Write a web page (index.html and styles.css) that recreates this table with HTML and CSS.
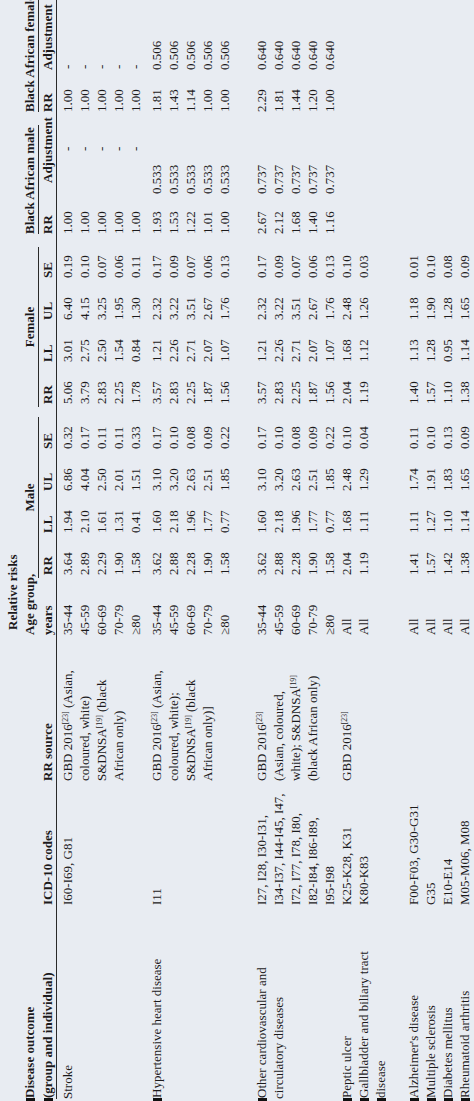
FILE: index.html
```html
<!DOCTYPE html>
<html lang="en">
<head>
<meta charset="utf-8">
<title>Relative risks table</title>
<link rel="stylesheet" href="styles.css">
</head>
<body>
<div class="page">
  <div class="sheet">
    <table class="t">
      <colgroup>
        <col class="c-dis"><col class="c-icd"><col class="c-src"><col class="c-age">
        <col class="c-n"><col class="c-n"><col class="c-n"><col class="c-se">
        <col class="c-n"><col class="c-n"><col class="c-n"><col class="c-se2">
        <col class="c-brr"><col class="c-badj"><col class="c-n"><col class="c-fadj">
      </colgroup>
      <thead>
        <tr class="h1">
          <th colspan="3"></th>
          <th colspan="13" class="rr-title">Relative risks</th>
        </tr>
        <tr class="h2">
          <th class="mk">Disease outcome</th>
          <th></th>
          <th></th>
          <th>Age group,</th>
          <th colspan="4" class="grp"><div class="rule ctr">Male</div></th>
          <th colspan="4" class="grp"><div class="rule ctr">Female</div></th>
          <th colspan="2" class="grp"><div class="rule">Black African male</div></th>
          <th colspan="2" class="grp"><div class="rule last">Black African female</div></th>
        </tr>
        <tr class="h3">
          <th class="mk">(group and individual)</th>
          <th>ICD-10 codes</th>
          <th>RR source</th>
          <th>years</th>
          <th>RR</th><th>LL</th><th>UL</th><th>SE</th>
          <th>RR</th><th>LL</th><th>UL</th><th>SE</th>
          <th>RR</th><th class="adj-m">Adjustment</th>
          <th>RR</th><th class="adj-f">Adjustment</th>
        </tr>
      </thead>
      <tbody>
        <tr class="first">
          <td>Stroke</td><td>I60-I69, G81</td><td>GBD 2016<sup>[23]</sup> (Asian,</td><td>35-44</td>
          <td>3.64</td><td>1.94</td><td>6.86</td><td>0.32</td>
          <td>5.06</td><td>3.01</td><td>6.40</td><td>0.19</td>
          <td>1.00</td><td class="dm">-</td><td>1.00</td><td class="df">-</td>
        </tr>
        <tr>
          <td></td><td></td><td>coloured, white)</td><td>45-59</td>
          <td>2.89</td><td>2.10</td><td>4.04</td><td>0.17</td>
          <td>3.79</td><td>2.75</td><td>4.15</td><td>0.10</td>
          <td>1.00</td><td class="dm">-</td><td>1.00</td><td class="df">-</td>
        </tr>
        <tr>
          <td></td><td></td><td>S&amp;DNSA<sup>[19]</sup> (black</td><td>60-69</td>
          <td>2.29</td><td>1.61</td><td>2.50</td><td>0.11</td>
          <td>2.83</td><td>2.50</td><td>3.25</td><td>0.07</td>
          <td>1.00</td><td class="dm">-</td><td>1.00</td><td class="df">-</td>
        </tr>
        <tr>
          <td></td><td></td><td>African only)</td><td>70-79</td>
          <td>1.90</td><td>1.31</td><td>2.01</td><td>0.11</td>
          <td>2.25</td><td>1.54</td><td>1.95</td><td>0.06</td>
          <td>1.00</td><td class="dm">-</td><td>1.00</td><td class="df">-</td>
        </tr>
        <tr>
          <td></td><td></td><td></td><td>&ge;80</td>
          <td>1.58</td><td>0.41</td><td>1.51</td><td>0.33</td>
          <td>1.78</td><td>0.84</td><td>1.30</td><td>0.11</td>
          <td>1.00</td><td class="dm">-</td><td>1.00</td><td class="df">-</td>
        </tr>

        <tr class="grp-a">
          <td class="mk">Hypertensive heart disease</td><td>I11</td><td>GBD 2016<sup>[23]</sup> (Asian,</td><td>35-44</td>
          <td>3.62</td><td>1.60</td><td>3.10</td><td>0.17</td>
          <td>3.57</td><td>1.21</td><td>2.32</td><td>0.17</td>
          <td>1.93</td><td>0.533</td><td>1.81</td><td>0.506</td>
        </tr>
        <tr>
          <td></td><td></td><td>coloured, white);</td><td>45-59</td>
          <td>2.88</td><td>2.18</td><td>3.20</td><td>0.10</td>
          <td>2.83</td><td>2.26</td><td>3.22</td><td>0.09</td>
          <td>1.53</td><td>0.533</td><td>1.43</td><td>0.506</td>
        </tr>
        <tr>
          <td></td><td></td><td>S&amp;DNSA<sup>[19]</sup> (black</td><td>60-69</td>
          <td>2.28</td><td>1.96</td><td>2.63</td><td>0.08</td>
          <td>2.25</td><td>2.71</td><td>3.51</td><td>0.07</td>
          <td>1.22</td><td>0.533</td><td>1.14</td><td>0.506</td>
        </tr>
        <tr>
          <td></td><td></td><td>African only)]</td><td>70-79</td>
          <td>1.90</td><td>1.77</td><td>2.51</td><td>0.09</td>
          <td>1.87</td><td>2.07</td><td>2.67</td><td>0.06</td>
          <td>1.01</td><td>0.533</td><td>1.00</td><td>0.506</td>
        </tr>
        <tr>
          <td></td><td></td><td></td><td>&ge;80</td>
          <td>1.58</td><td>0.77</td><td>1.85</td><td>0.22</td>
          <td>1.56</td><td>1.07</td><td>1.76</td><td>0.13</td>
          <td>1.00</td><td>0.533</td><td>1.00</td><td>0.506</td>
        </tr>

        <tr class="grp-b">
          <td class="mk">Other cardiovascular and</td><td>I27, I28, I30-I31,</td><td>GBD 2016<sup>[23]</sup></td><td>35-44</td>
          <td>3.62</td><td>1.60</td><td>3.10</td><td>0.17</td>
          <td>3.57</td><td>1.21</td><td>2.32</td><td>0.17</td>
          <td>2.67</td><td>0.737</td><td>2.29</td><td>0.640</td>
        </tr>
        <tr>
          <td>circulatory diseases</td><td>I34-I37, I44-I45, I47,</td><td>(Asian, coloured,</td><td>45-59</td>
          <td>2.88</td><td>2.18</td><td>3.20</td><td>0.10</td>
          <td>2.83</td><td>2.26</td><td>3.22</td><td>0.09</td>
          <td>2.12</td><td>0.737</td><td>1.81</td><td>0.640</td>
        </tr>
        <tr>
          <td></td><td>I72, I77, I78, I80,</td><td>white); S&amp;DNSA<sup>[19]</sup></td><td>60-69</td>
          <td>2.28</td><td>1.96</td><td>2.63</td><td>0.08</td>
          <td>2.25</td><td>2.71</td><td>3.51</td><td>0.07</td>
          <td>1.68</td><td>0.737</td><td>1.44</td><td>0.640</td>
        </tr>
        <tr>
          <td></td><td>I82-I84, I86-I89,</td><td>(black African only)</td><td>70-79</td>
          <td>1.90</td><td>1.77</td><td>2.51</td><td>0.09</td>
          <td>1.87</td><td>2.07</td><td>2.67</td><td>0.06</td>
          <td>1.40</td><td>0.737</td><td>1.20</td><td>0.640</td>
        </tr>
        <tr>
          <td></td><td>I95-I98</td><td></td><td>&ge;80</td>
          <td>1.58</td><td>0.77</td><td>1.85</td><td>0.22</td>
          <td>1.56</td><td>1.07</td><td>1.76</td><td>0.13</td>
          <td>1.16</td><td>0.737</td><td>1.00</td><td>0.640</td>
        </tr>

        <tr>
          <td class="mk">Peptic ulcer</td><td>K25-K28, K31</td><td>GBD 2016<sup>[23]</sup></td><td>All</td>
          <td>2.04</td><td>1.68</td><td>2.48</td><td>0.10</td>
          <td>2.04</td><td>1.68</td><td>2.48</td><td>0.10</td>
          <td></td><td></td><td></td><td></td>
        </tr>
        <tr>
          <td class="mk">Gallbladder and biliary tract</td><td>K80-K83</td><td></td><td>All</td>
          <td>1.19</td><td>1.11</td><td>1.29</td><td>0.04</td>
          <td>1.19</td><td>1.12</td><td>1.26</td><td>0.03</td>
          <td></td><td></td><td></td><td></td>
        </tr>
        <tr>
          <td class="mk">disease</td><td></td><td></td><td></td>
          <td></td><td></td><td></td><td></td>
          <td></td><td></td><td></td><td></td>
          <td></td><td></td><td></td><td></td>
        </tr>

        <tr class="grp-d">
          <td class="mk">Alzheimer's disease</td><td>F00-F03, G30-G31</td><td></td><td>All</td>
          <td>1.41</td><td>1.11</td><td>1.74</td><td>0.11</td>
          <td>1.40</td><td>1.13</td><td>1.18</td><td>0.01</td>
          <td></td><td></td><td></td><td></td>
        </tr>
        <tr>
          <td class="mk">Multiple sclerosis</td><td>G35</td><td></td><td>All</td>
          <td>1.57</td><td>1.27</td><td>1.91</td><td>0.10</td>
          <td>1.57</td><td>1.28</td><td>1.90</td><td>0.10</td>
          <td></td><td></td><td></td><td></td>
        </tr>
        <tr>
          <td class="mk">Diabetes mellitus</td><td>E10-E14</td><td></td><td>All</td>
          <td>1.42</td><td>1.10</td><td>1.83</td><td>0.13</td>
          <td>1.10</td><td>0.95</td><td>1.28</td><td>0.08</td>
          <td></td><td></td><td></td><td></td>
        </tr>
        <tr>
          <td class="mk">Rheumatoid arthritis</td><td>M05-M06, M08</td><td></td><td>All</td>
          <td>1.38</td><td>1.14</td><td>1.65</td><td>0.09</td>
          <td>1.38</td><td>1.14</td><td>1.65</td><td>0.09</td>
          <td></td><td></td><td></td><td></td>
        </tr>
      </tbody>
    </table>
  </div>
</div>
</body>
</html>
```
FILE: styles.css
```css
html, body {
  margin: 0;
  padding: 0;
  background: #e8ecf2;
}

.page {
  width: 474px;
  height: 1101px;
  overflow: hidden;
  background: #e8ecf2;
}

.sheet {
  width: 1101px;
  height: 474px;
  box-sizing: border-box;
  padding: 4px 0 0 2px;
  transform-origin: 0 0;
  transform: rotate(-90deg) translateX(-100%);
  font-family: "Liberation Serif", "Times New Roman", serif;
  font-size: 13px;
  color: #1c1a1b;
}

.t {
  border-collapse: collapse;
  table-layout: fixed;
  width: 1099px;
}

.c-dis { width: 194px; }
.c-icd { width: 124px; }
.c-src { width: 146px; }
.c-age { width: 60px; }
.c-n { width: 42px; }
.c-se { width: 45px; }
.c-se2 { width: 44px; }
.c-brr { width: 40px; }
.c-badj { width: 82px; }
.c-fadj { width: 70px; }

th, td {
  padding: 0;
  text-align: left;
  vertical-align: top;
  white-space: nowrap;
  overflow: visible;
  line-height: 17px;
  height: 17px;
}

th {
  font-weight: bold;
}

.h1 th {
  height: 17px;
  line-height: 17px;
}

.rr-title {
  padding-left: 5px;
}

.h2 th {
  height: 18px;
  line-height: 17px;
}

.grp {
  vertical-align: bottom;
}

.rule {
  border-bottom: 1px solid #2a2a2a;
  margin-right: 13px;
  line-height: 17px;
}

.rule.ctr {
  text-align: center;
  margin-left: -3px;
}

.rule.last {
  margin-right: 0;
}

.h3 th {
  height: 17px;
  line-height: 17px;
  border-bottom: 1.5px solid #2a2a2a;
}

.adj-m {
  padding-left: 11px;
}

.adj-f {
  padding-left: 0;
}

.first td {
  padding-top: 2px;
}

.dm {
  padding-left: 43px;
}

.df {
  padding-left: 1px;
}

.grp-a td { padding-top: 4px; }
.grp-b td { padding-top: 20px; }
.grp-d td { padding-top: 16px; }

.mk::before {
  content: "";
  display: inline-block;
  width: 3px;
  height: 9px;
  margin-left: -2px;
  margin-right: 0;
  background: #111;
  vertical-align: -1px;
}

sup {
  font-size: 0.6em;
  line-height: 0;
  vertical-align: 0.55em;
}
```
